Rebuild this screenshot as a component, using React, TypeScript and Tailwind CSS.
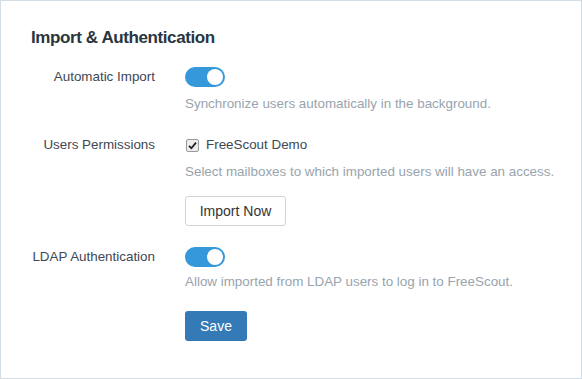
import React, { useState } from 'react';

// Simple on/off switch styled like the settings toggles
function Toggle({ on, onChange }: { on: boolean; onChange: () => void }) {
  return (
    <button
      type="button"
      onClick={onChange}
      className={`relative block w-[40px] h-[20px] rounded-full ${on ? 'bg-[#3498db]' : 'bg-[#ccd3da]'}`}
    >
      <span
        className={`absolute top-[2px] w-[16px] h-[16px] rounded-full bg-white ${on ? 'left-[22px]' : 'left-[2px]'}`}
      />
    </button>
  );
}

// Grey native-looking checkbox
function Checkbox({ checked, onChange }: { checked: boolean; onChange: () => void }) {
  return (
    <span
      onClick={onChange}
      className="flex items-center justify-center w-[13px] h-[13px] rounded-[2px] border border-[#9a9a9a] bg-[#ededed]"
    >
      {checked && (
        <svg width="9" height="9" viewBox="0 0 9 9">
          <path d="M1 4.8 L3.4 7.2 L8 1.6" fill="none" stroke="#222" strokeWidth="1.8" />
        </svg>
      )}
    </span>
  );
}

export default function App() {
  const [autoImport, setAutoImport] = useState(true);
  const [ldapAuth, setLdapAuth] = useState(true);
  const [demo, setDemo] = useState(true);

  return (
    <div
      className="w-[582px] h-[379px] bg-white border border-[#d5dde4] text-[13.4px] text-[#3d4852]"
      style={{ fontFamily: '"Liberation Sans", Arial, sans-serif' }}
    >
      {/* Header */}
      <h3 className="mt-[27px] ml-[30px] text-[17px] leading-[20px] font-bold tracking-[-0.4px] text-[#2a3540]">
        Import &amp; Authentication
      </h3>

      {/* Automatic Import */}
      <div className="flex mt-[19px]">
        <label className="w-[154px] text-right leading-[20px]">Automatic Import</label>
        <div className="ml-[30px]">
          <Toggle on={autoImport} onChange={() => setAutoImport(!autoImport)} />
          <p className="mt-[8px] leading-[18px] text-[#98a4ae]">
            Synchronize users automatically in the background.
          </p>
        </div>
      </div>

      {/* Users Permissions */}
      <div className="flex mt-[22px]">
        <label className="w-[154px] text-right leading-[20px]">Users Permissions</label>
        <div className="ml-[30px]">
          <label className="flex items-center gap-[7px] leading-[20px]">
            <span className="ml-[1px]">
              <Checkbox checked={demo} onChange={() => setDemo(!demo)} />
            </span>
            <span>FreeScout Demo</span>
          </label>
          <p className="mt-[8px] leading-[18px] text-[#98a4ae]">
            Select mailboxes to which imported users will have an access.
          </p>
          <button
            type="button"
            className="block mt-[15px] h-[30px] w-[101px] border border-[#cfd4d9] rounded-[3px] text-[14px] text-[#333] bg-white"
          >
            Import Now
          </button>
        </div>
      </div>

      {/* LDAP Authentication */}
      <div className="flex mt-[21px]">
        <label className="w-[154px] text-right leading-[20px]">LDAP Authentication</label>
        <div className="ml-[30px]">
          <Toggle on={ldapAuth} onChange={() => setLdapAuth(!ldapAuth)} />
          <p className="mt-[6px] leading-[18px] text-[#98a4ae]">
            Allow imported from LDAP users to log in to FreeScout.
          </p>
          <button
            type="button"
            className="block mt-[20px] h-[30px] w-[62px] rounded-[3px] text-[14px] text-white bg-[#337ab7]"
          >
            Save
          </button>
        </div>
      </div>
    </div>
  );
}
